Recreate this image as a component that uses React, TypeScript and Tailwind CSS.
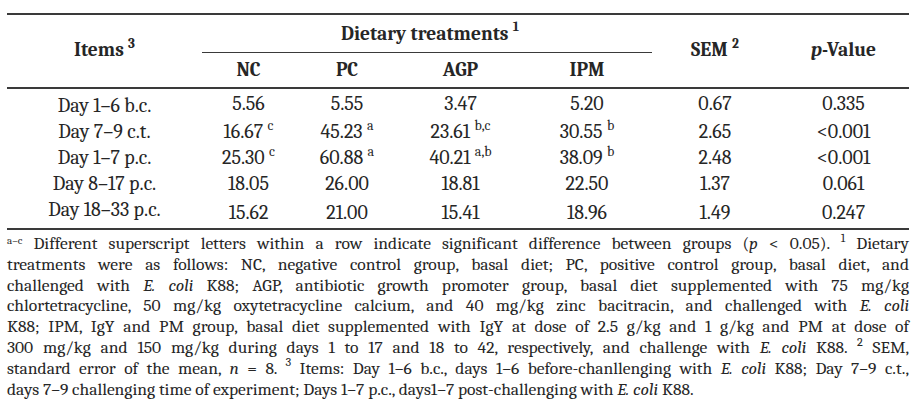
const rows: { item: string; vals: [string, string?][]; sem: string; p: string }[] = [
  { item: "Day 1–6 b.c.", vals: [["5.56"], ["5.55"], ["3.47"], ["5.20"]], sem: "0.67", p: "0.335" },
  { item: "Day 7–9 c.t.", vals: [["16.67", "c"], ["45.23", "a"], ["23.61", "b,c"], ["30.55", "b"]], sem: "2.65", p: "<0.001" },
  { item: "Day 1–7 p.c.", vals: [["25.30", "c"], ["60.88", "a"], ["40.21", "a,b"], ["38.09", "b"]], sem: "2.48", p: "<0.001" },
  { item: "Day 8–17 p.c.", vals: [["18.05"], ["26.00"], ["18.81"], ["22.50"]], sem: "1.37", p: "0.061" },
  { item: "Day 18–33 p.c.", vals: [["15.62"], ["21.00"], ["15.41"], ["18.96"]], sem: "1.49", p: "0.247" },
];

const Sup = ({ children }: { children: React.ReactNode }) => (
  <sup className="text-[0.7em] relative -top-[0.6em]">{children}</sup>
);

const Ec = () => <i>E. coli</i>;

function Line({ children, last }: { children: React.ReactNode; last?: boolean }) {
  return (
    <div className={last ? "text-left" : "text-justify [text-align-last:justify]"}>{children}</div>
  );
}

export default function App() {
  return (
    <div className="w-[920px] h-[412px] bg-white text-[#262626] font-serif px-[7px] pt-[13px]">
      <table className="w-[902px] table-fixed border-collapse">
        <colgroup>
          <col className="w-[195px]" />
          <col className="w-[93px]" />
          <col className="w-[104px]" />
          <col className="w-[123px]" />
          <col className="w-[130px]" />
          <col className="w-[126px]" />
          <col className="w-[131px]" />
        </colgroup>
        <thead className="text-[19.5px] font-bold">
          <tr className="border-t-2 border-[#3a3a3a]">
            <th rowSpan={2} className="text-center align-middle pb-[2px] font-bold">
              Items <Sup>3</Sup>
            </th>
            <th colSpan={4} className="h-[38px] text-center font-bold border-b-[1.5px] border-[#3a3a3a] pl-[6px]">
              Dietary treatments <Sup>1</Sup>
            </th>
            <th rowSpan={2} className="text-center align-middle pb-[2px] font-bold">
              SEM <Sup>2</Sup>
            </th>
            <th rowSpan={2} className="text-center align-middle pb-[2px] font-bold">
              <i>p</i>-Value
            </th>
          </tr>
          <tr className="border-b-2 border-[#3a3a3a]">
            <th className="h-[36px] text-center font-bold">NC</th>
            <th className="text-center font-bold">PC</th>
            <th className="text-center font-bold">AGP</th>
            <th className="text-center font-bold">IPM</th>
          </tr>
        </thead>
        <tbody className="text-[20px]">
          {rows.map((r, i) => (
            <tr key={r.item} className={i === rows.length - 1 ? "border-b-2 border-[#3a3a3a]" : ""}>
              <td
                className={
                  "text-center leading-[26px] " + (i === 0 ? "pt-[4px] " : "") + (i === rows.length - 1 ? "pb-[5px]" : "")
                }
              >
                {r.item}
              </td>
              {r.vals.map(([v, s], j) => (
                <td key={j} className="text-center leading-[26px]">
                  {v}
                  {s && (
                    <>
                      {" "}
                      <Sup>{s}</Sup>
                    </>
                  )}
                </td>
              ))}
              <td className="text-center leading-[26px]">{r.sem}</td>
              <td className="text-center leading-[26px]">{r.p}</td>
            </tr>
          ))}
        </tbody>
      </table>
      <div className="w-[902px] pt-[3px] text-[17.5px] leading-[20.8px]">
        <Line>
          <sup className="text-[11px] relative -top-[0.5em]">a–c</sup> Different superscript letters within a row
          indicate significant difference between groups (<i>p</i> &lt; 0.05). <Sup>1</Sup> Dietary
        </Line>
        <Line>
          treatments were as follows: NC, negative control group, basal diet; PC, positive control group, basal diet, and
        </Line>
        <Line>
          challenged with <Ec /> K88; AGP, antibiotic growth promoter group, basal diet supplemented with 75 mg/kg
        </Line>
        <Line>
          chlortetracycline, 50 mg/kg oxytetracycline calcium, and 40 mg/kg zinc bacitracin, and challenged with <Ec />
        </Line>
        <Line>
          K88; IPM, IgY and PM group, basal diet supplemented with IgY at dose of 2.5 g/kg and 1 g/kg and PM at dose of
        </Line>
        <Line>
          300 mg/kg and 150 mg/kg during days 1 to 17 and 18 to 42, respectively, and challenge with <Ec /> K88.{" "}
          <Sup>2</Sup> SEM,
        </Line>
        <Line>
          standard error of the mean, <i>n</i> = 8. <Sup>3</Sup> Items: Day 1–6 b.c., days 1–6 before-chanllenging with{" "}
          <Ec /> K88; Day 7–9 c.t.,
        </Line>
        <Line last>
          days 7–9 challenging time of experiment; Days 1–7 p.c., days1–7 post-challenging with <Ec /> K88.
        </Line>
      </div>
    </div>
  );
}
